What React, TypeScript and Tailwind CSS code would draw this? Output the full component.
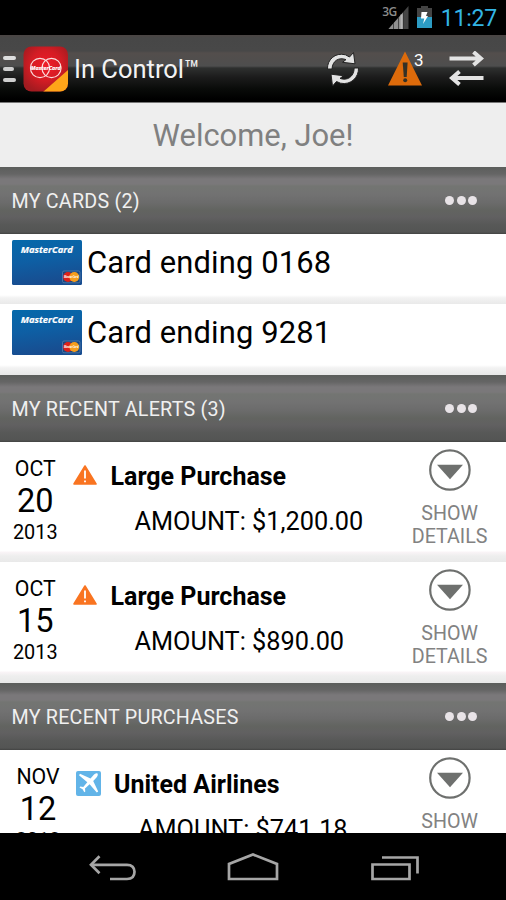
import { ReactNode } from "react";

interface Activity {
  month: string;
  day: string;
  year: string;
  title: string;
  amount: string;
  kind: "alert" | "flight";
}

const cards = ["0168", "9281"];

const alerts: Activity[] = [
  { month: "OCT", day: "20", year: "2013", title: "Large Purchase", amount: "$1,200.00", kind: "alert" },
  { month: "OCT", day: "15", year: "2013", title: "Large Purchase", amount: "$890.00", kind: "alert" },
];

const purchases: Activity[] = [
  { month: "NOV", day: "12", year: "2013", title: "United Airlines", amount: "$741.18", kind: "flight" },
];

const StatusBar = () => (
  <div className="flex h-[35px] shrink-0 items-start justify-end bg-black pr-[9px]">
    <span className="mt-[5px] font-['Open_Sans'] text-[12px] leading-[14px] font-semibold tracking-[-0.6px] text-[#8c8c8c]">
      3G
    </span>
    <svg className="-ml-[9px] mt-[6px]" width="21" height="23" viewBox="0 0 21 23">
      <path d="M20.5 0V23H0.5Z" fill="#454545" />
      <path d="M15 6.5V23H0.5Z" fill="#8f8f8f" />
      <path d="M5.5 17V23M10.5 11V23M15.5 6V23" stroke="#333" strokeWidth="0.8" />
      <path d="M13.5 8.5V23" stroke="#b5b5b5" strokeWidth="2" />
    </svg>
    <svg className="ml-[8px] mt-[6px]" width="15" height="23" viewBox="0 0 15 23">
      <path d="M4 0H11V2H15V12H0V2H4Z" fill="#444" />
      <path d="M0 11H15V22H0Z" fill="#2c9cc4" />
      <path d="M4.5 6L10.5 6L9 10H11L6 18L7.3 12.5H4Z" fill="#fff" />
    </svg>
    <span className="ml-[9px] mt-[6px] text-[23px] leading-[26px] tracking-[-0.2px] text-[#33b5e5]">11:27</span>
  </div>
);

const AppLogo = () => (
  <svg className="ml-[7px] shrink-0" width="46" height="46" viewBox="0 0 46 46">
    <defs>
      <radialGradient id="logoRed" cx="50%" cy="42%" r="60%">
        <stop offset="0" stopColor="#f01c28" />
        <stop offset="0.55" stopColor="#d41c24" />
        <stop offset="1" stopColor="#a31b20" />
      </radialGradient>
      <clipPath id="logoClip">
        <rect x="0.5" y="0.5" width="44.5" height="45" rx="8" />
      </clipPath>
    </defs>
    <g clipPath="url(#logoClip)">
      <rect width="46" height="46" fill="url(#logoRed)" />
      <path d="M46 23V46H20Z" fill="#ffa519" />
    </g>
    <g fill="none" stroke="#fbdcdc" strokeWidth="1.1">
      <circle cx="17" cy="22" r="9.6" />
      <circle cx="28.5" cy="22" r="9.6" />
    </g>
    <text
      x="22.8"
      y="24.4"
      textAnchor="middle"
      fill="#fff"
      stroke="#fff"
      strokeWidth="0.2"
      fontFamily="Open Sans, sans-serif"
      fontSize="6"
      fontWeight="700"
      fontStyle="italic"
      textLength="30"
      lengthAdjust="spacingAndGlyphs"
    >
      MasterCard
    </text>
  </svg>
);

const AppBar = () => (
  <header className="flex h-[67px] shrink-0 items-center bg-[linear-gradient(#4b4543_0,#474747_3px,#484848_16px,#534e4c_18px,#4e4e4e_31px,#2e302f_33px,#1c1c1c_42px,#090b09_54px,#000_64px)]">
    <div className="flex w-4 shrink-0 flex-col gap-[7px] pl-[3px]">
      <span className="h-1 w-[13px] rounded-full bg-[#dedede]" />
      <span className="h-1 w-[11px] rounded-full bg-[#cfcfcf]" />
      <span className="h-1 w-[13px] rounded-full bg-[#cfcfcf]" />
    </div>
    <AppLogo />
    <h1 className="ml-[5px] text-[25.5px] leading-[30px] text-[#f3f3f3]">In Control™</h1>
    <div className="ml-auto flex items-start pr-[22px]">
      <svg width="34" height="36" viewBox="0 0 34 36">
        <g stroke="#222" strokeWidth="1" fill="#e3e3e3" strokeLinejoin="round">
          <path d="M1.5 18C1 9 9 1 19.5 3.8L23.5 6L27.5 1.5L29 12.8L16.5 11.3L20 8.6C13 6 6.5 9.5 6 18Z" />
          <path d="M32.5 17C33 26 25 34.5 14.5 32.2L10.5 30.5L6.5 35L5 23.2L17.5 24.7L14 27.4C21 30 28 26 28.2 17Z" />
        </g>
      </svg>
      <svg className="ml-[28px]" width="34" height="35" viewBox="0 0 34 35">
        <path d="M17 0.5L34 34.5H0Z" fill="#dd6b0b" />
        <path d="M14.7 11.5H19.6L18.7 26H15.8Z" fill="#353126" />
        <circle cx="17.2" cy="29.2" r="2" fill="#353126" />
      </svg>
      <span className="-ml-[8px] mt-[1px] w-[9px] text-[17px] leading-4 text-white">3</span>
      <svg className="ml-[26px]" width="35" height="35" viewBox="0 0 35 35">
        <g fill="none" stroke="#e3e3e3" strokeWidth="4">
          <path d="M0.5 7.5H32M24.5 1L32 7.5L24.5 14" />
          <path d="M34.5 27H3M10.500 20.500L3 27L10.500 33.500" />
        </g>
      </svg>
    </div>
  </header>
);

const SectionHeader = ({ children }: { children: ReactNode }) => (
  <div className="flex h-[67.5px] shrink-0 items-center justify-between bg-[linear-gradient(#5c5e5c_0,#5d5f5d_1px,#656565_7px,#7a787a_12px,#7a787a_17px,#737572_19px,#727272_27px,#6b6b6b_36px,#626460_43px,#616061_50px,#575857_58px,#545554_65px,#424342_67px)] pl-[11.5px] pr-[29px]">
    <h2 className="pt-[4px] text-[19.7px] leading-6 tracking-[0.23px] text-[#f0f0f0]">{children}</h2>
    <div className="flex gap-[2.3px] pt-[1px]">
      <span className="size-[9px] rounded-full bg-[#e8e3e7]" />
      <span className="size-[9px] rounded-full bg-[#e8e3e7]" />
      <span className="size-[9px] rounded-full bg-[#e8e3e7]" />
    </div>
  </div>
);

const CardImage = () => (
  <svg className="mt-[6px] shrink-0" width="70" height="45" viewBox="0 0 70 45">
    <defs>
      <linearGradient id="cardBlue" x1="0" y1="0" x2="0.2" y2="1">
        <stop offset="0" stopColor="#0469ab" />
        <stop offset="0.5" stopColor="#0e5fa4" />
        <stop offset="1" stopColor="#184d90" />
      </linearGradient>
    </defs>
    <rect width="70" height="45" rx="1.5" fill="url(#cardBlue)" />
    <text
      x="8.8"
      y="12.8"
      fill="#fff"
      stroke="#fff"
      strokeWidth="0.2"
      fontFamily="Open Sans, sans-serif"
      fontSize="9.4"
      fontWeight="700"
      fontStyle="italic"
      textLength="52"
      lengthAdjust="spacingAndGlyphs"
    >
      MasterCard
    </text>
    <rect x="50.5" y="31" width="17.5" height="11.8" rx="1.5" fill="#1a4880" stroke="#5e85b0" strokeWidth="0.7" />
    <circle cx="56" cy="37" r="4.9" fill="#dc2119" />
    <circle cx="62.3" cy="37" r="4.9" fill="#f79e1b" />
    <text
      x="59.2"
      y="38.3"
      textAnchor="middle"
      fill="#fff"
      fontFamily="Open Sans, sans-serif"
      fontSize="3.6"
      fontWeight="700"
      fontStyle="italic"
      textLength="14.5"
      lengthAdjust="spacingAndGlyphs"
    >
      MasterCard
    </text>
  </svg>
);

const CardRow = ({ ending }: { ending: string }) => (
  <div className="flex h-[70.25px] shrink-0 items-start bg-[linear-gradient(#fff_61px,#f2f2f2_64px,#e9e9e9_70px)] pl-[11.5px]">
    <CardImage />
    <span className="ml-[5.5px] text-[30.9px] leading-[57px] tracking-[0.13px] text-black">Card ending {ending}</span>
  </div>
);

const AlertIcon = () => (
  <svg width="24" height="20" viewBox="0 0 24 20">
    <path d="M12 1L23 19H1Z" fill="#f97421" stroke="#f97421" strokeWidth="1.6" strokeLinejoin="round" />
    <path d="M12 5.5V13.5M12 15.5V17.3" stroke="#fff" strokeWidth="1.8" />
  </svg>
);

const FlightIcon = () => (
  <svg width="25" height="25" viewBox="0 0 25 25">
    <rect width="25" height="25" rx="2" fill="#62b4e8" />
    <path
      d="M21.5 2.5C20.3 1.8 18.8 2.8 17.8 3.8L14.5 7.5L4 2.8L3 4.2L11.3 11.2L7.3 16L4.3 15.6L3.5 16.6L6.6 18.2L8.3 21.3L9.3 20.5L9 17.5L13.6 13.3L20.8 21.5L22.2 20.5L17.2 10L20.5 6.5C21.5 5.5 22.3 3.5 21.5 2.5Z"
      fill="#fff"
    />
  </svg>
);

const ActivityRow = ({ item }: { item: Activity }) => {
  const isAlert = item.kind === "alert";

  return (
    <div className="flex h-[120.25px] shrink-0 items-start bg-[linear-gradient(#fff_109px,#faf4f7_110px,#eee_114px,#e9e9e9_120px)] text-black">
      <div
        className={
          isAlert
            ? "flex w-[70.5px] shrink-0 flex-col items-center pt-[13px]"
            : "flex w-[76px] shrink-0 flex-col items-center pt-[13px]"
        }
      >
        <span className="text-[21.3px] leading-[28px]">{item.month}</span>
        <span className="text-[32.5px] leading-[36px]">{item.day}</span>
        <span className="text-[19.9px] leading-[27px]">{item.year}</span>
      </div>
      <div className={isAlert ? "ml-[2.5px] mt-[22.5px] w-[37px] shrink-0" : "mt-[21px] w-[37.5px] shrink-0"}>
        {isAlert ? <AlertIcon /> : <FlightIcon />}
      </div>
      <div className="flex flex-col pt-[19px]">
        <span className="ml-[0.5px] text-[25px] leading-[31px] font-bold">{item.title}</span>
        <span className="mt-[14px] ml-[24.5px] text-[25.3px] leading-[32px]">AMOUNT: {item.amount}</span>
      </div>
      <button className="mr-[12.4px] ml-auto flex w-[88px] flex-col items-center pt-[7px] text-[#828282]">
        <svg width="42" height="42" viewBox="0 0 42 42">
          <circle cx="20.9" cy="21" r="19.7" fill="none" stroke="#6e706e" strokeWidth="2.2" />
          <path d="M8 15.8H34L21 30.3Z" fill="#6e706e" />
        </svg>
        <span className="mt-[11px] text-center text-[19.7px] leading-[23.2px]">SHOW DETAILS</span>
      </button>
    </div>
  );
};

const NavBar = () => (
  <nav className="flex h-[67px] shrink-0 items-start bg-black pl-[89px]">
    <svg className="mt-[22px]" width="48" height="28" viewBox="0 0 48 28" fill="none" stroke="#a6a6a6" strokeWidth="2.7">
      <path d="M2 9.8H38C43 9.8 45.5 12.8 45.5 16.8C45.5 21.1 43 24 38 24H21" />
      <path d="M10.5 1.3L2 9.8L10.5 18.3" />
    </svg>
    <svg className="ml-[90px] mt-[19px]" width="52" height="30" viewBox="0 0 52 30" fill="none" stroke="#a6a6a6" strokeWidth="2.7">
      <path d="M2 27V12L26 2.5L50 12V27Z" />
    </svg>
    <svg className="ml-[92px] mt-[22px]" width="49" height="28" viewBox="0 0 49 28" fill="none" stroke="#a6a6a6" strokeWidth="2.7">
      <path d="M1.5 9.5H38.5V24H1.5Z" />
      <path d="M11 2.5H46.5V18.5" />
    </svg>
  </nav>
);

const App = () => {
  return (
    <div className="flex h-[900px] w-[506px] flex-col overflow-hidden bg-black font-[Roboto,sans-serif]">
      <StatusBar />
      <AppBar />
      <main className="flex min-h-0 flex-1 flex-col overflow-hidden bg-white">
        <div className="flex h-[64.5px] shrink-0 items-center justify-center border-t border-[#777] bg-[#eee] pt-[3px] text-[30.9px] text-[#808080]">
          Welcome, Joe!
        </div>
        <SectionHeader>MY CARDS (2)</SectionHeader>
        {cards.map((ending) => (
          <CardRow key={ending} ending={ending} />
        ))}
        <SectionHeader>MY RECENT ALERTS (3)</SectionHeader>
        {alerts.map((item) => (
          <ActivityRow key={item.day} item={item} />
        ))}
        <SectionHeader>MY RECENT PURCHASES</SectionHeader>
        {purchases.map((item) => (
          <ActivityRow key={item.day} item={item} />
        ))}
      </main>
      <NavBar />
    </div>
  );
};

export default App;
